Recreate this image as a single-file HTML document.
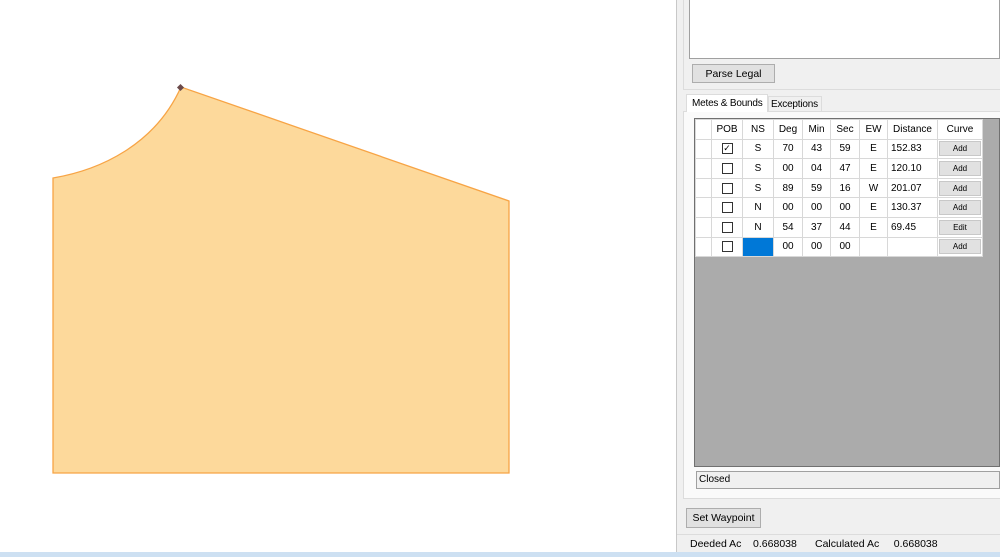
<!DOCTYPE html>
<html><head><meta charset="utf-8"><style>
*{margin:0;padding:0;box-sizing:border-box}
body{width:1000px;height:557px;overflow:hidden;background:#fff;font-family:"Liberation Sans",sans-serif;font-size:10.5px;color:#000;position:relative}
.a{position:absolute;white-space:nowrap}
.btn{position:absolute;background:#e1e1e1;border:1px solid #adadad;text-align:center;font-size:10.5px}
table{border-collapse:collapse;position:absolute;left:695px;top:119px;background:#fff}
td{border:1px solid #d8d8d8;height:19.6px;text-align:center;font-size:10px;padding:0}
td.l{text-align:left;padding-left:3px}
.cb{display:inline-block;width:11px;height:11px;border:1px solid #333;vertical-align:middle;background:#fff;font-size:9px;line-height:9px}
.cbtn{display:block;margin:0 auto;width:42px;height:15px;background:#e1e1e1;border:1px solid #c8c8c8;font-size:8px;line-height:13px}
</style></head><body>
<svg class="a" style="left:0;top:0" width="676" height="557">
<path d="M53 178 C 100 170, 155 145, 181 87 L509 201 L509 473 L53 473 Z" fill="#fdd99b" stroke="#f7a445" stroke-width="1.3"/>
<rect x="178" y="85" width="5" height="5" fill="#6b4a4a" transform="rotate(45 180.5 87.5)"/>
</svg>
<div class="a" style="left:676px;top:0;width:324px;height:552px;background:#f0f0f0;border-left:1px solid #c8c8c8"></div>
<div class="a" style="left:683px;top:0;width:317px;height:90px;border-left:1px solid #dcdcdc;border-bottom:1px solid #dcdcdc"></div>
<div class="a" style="left:689px;top:0;width:311px;height:59px;background:#fff;border:1px solid #a0a0a0;border-top:none"></div>
<div class="btn" style="left:692px;top:64px;width:83px;height:19px;line-height:18px">Parse Legal</div>
<div class="a" style="left:683px;top:111px;width:317px;height:388px;border:1px solid #dcdcdc;border-right:none;background:#fafafa"></div>
<div class="a" style="left:686px;top:94px;width:82px;height:18px;background:#fff;border:1px solid #dcdcdc;border-bottom:none;padding:3px 0 0 5px;font-size:10px;letter-spacing:-0.2px">Metes &amp; Bounds</div>
<div class="a" style="left:768px;top:96px;width:54px;height:16px;background:#f0f0f0;border:1px solid #dcdcdc;padding:2px 0 0 2px;font-size:10px;letter-spacing:-0.2px">Exceptions</div>
<div class="a" style="left:694px;top:118px;width:306px;height:349px;background:#ababab;border:1px solid #707070"></div>
<table>
<tr><td style="width:16px"></td><td style="width:31px">POB</td><td style="width:31px">NS</td><td style="width:29px">Deg</td><td style="width:28px">Min</td><td style="width:29px">Sec</td><td style="width:28px">EW</td><td style="width:50px">Distance</td><td style="width:45px">Curve</td></tr>
<tr><td></td><td><span class="cb">✓</span></td><td>S</td><td>70</td><td>43</td><td>59</td><td>E</td><td class="l">152.83</td><td><span class="cbtn">Add</span></td></tr>
<tr><td></td><td><span class="cb"></span></td><td>S</td><td>00</td><td>04</td><td>47</td><td>E</td><td class="l">120.10</td><td><span class="cbtn">Add</span></td></tr>
<tr><td></td><td><span class="cb"></span></td><td>S</td><td>89</td><td>59</td><td>16</td><td>W</td><td class="l">201.07</td><td><span class="cbtn">Add</span></td></tr>
<tr><td></td><td><span class="cb"></span></td><td>N</td><td>00</td><td>00</td><td>00</td><td>E</td><td class="l">130.37</td><td><span class="cbtn">Add</span></td></tr>
<tr><td></td><td><span class="cb"></span></td><td>N</td><td>54</td><td>37</td><td>44</td><td>E</td><td class="l">69.45</td><td><span class="cbtn">Edit</span></td></tr>
<tr><td></td><td><span class="cb"></span></td><td style="background:#0078d7"></td><td>00</td><td>00</td><td>00</td><td></td><td></td><td><span class="cbtn">Add</span></td></tr>
</table>
<div class="a" style="left:696px;top:471px;width:304px;height:18px;background:#f0f0f0;border:1px solid #a0a0a0;padding:2px 0 0 2px;font-size:10px">Closed</div>
<div class="btn" style="left:686px;top:508px;width:75px;height:20px;line-height:19px">Set Waypoint</div>
<div class="a" style="left:677px;top:534px;width:323px;height:1px;background:#dcdcdc"></div>
<div class="a" style="left:690px;top:538px;font-size:10.5px">Deeded Ac&nbsp;&nbsp;&nbsp; 0.668038</div>
<div class="a" style="left:815px;top:538px;font-size:10.5px">Calculated Ac&nbsp;&nbsp;&nbsp;&nbsp; 0.668038</div>
<div class="a" style="left:0;top:552px;width:1000px;height:5px;background:#cde0f2"></div>
</body></html>
